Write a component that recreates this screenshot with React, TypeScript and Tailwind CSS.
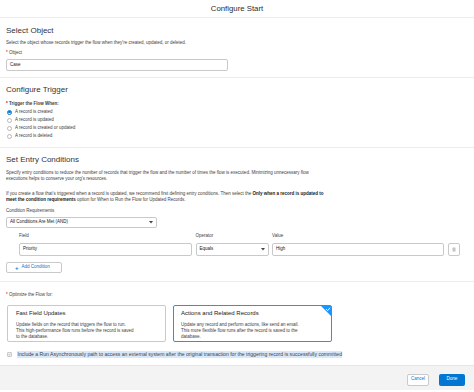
import { ChevronDown } from "lucide-react";

const triggers = [
  "A record is created",
  "A record is updated",
  "A record is created or updated",
  "A record is deleted",
];

function Radio({ checked }: { checked: boolean }) {
  return (
    <span
      className={
        "w-[5px] h-[5px] rounded-full border-[0.6px] flex items-center justify-center bg-white " +
        (checked ? "border-[#0176d3]" : "border-[#b8b8b8]")
      }
    >
      {checked && <span className="w-[2.6px] h-[2.6px] rounded-full bg-[#0176d3]" />}
    </span>
  );
}

function Caret() {
  return (
    <svg width="4" height="3" viewBox="0 0 4 3" className="shrink-0">
      <path d="M0 0 L4 0 L2 2.6 Z" fill="#444" />
    </svg>
  );
}

export default function App() {
  return (
    <div className="w-[474px] h-[392px] bg-white overflow-hidden flex flex-col font-['Liberation_Sans',Arial,sans-serif] text-[#3e3e3c]">
      {/* modal header */}
      <header className="h-[18px] border-b border-[#ececec] text-center text-[7.8px] leading-[17px] text-[#2b2b2b]">
        Configure Start
      </header>

      {/* Select Object */}
      <section className="px-[6px] pt-[8px] pb-[6px] border-b border-[#ececec]">
        <h2 className="text-[8px] leading-[10px] text-[#333]">Select Object</h2>
        <p className="mt-[4px] text-[4.5px] leading-[6px]">
          Select the object whose records trigger the flow when they're created, updated, or deleted.
        </p>
        <p className="mt-[4px] text-[4.5px] leading-[6px]">
          <span className="text-[#ba0517]">*</span> Object
        </p>
        <div className="mt-[3px] w-[222px] h-[12px] border-[0.8px] border-[#c9c9c9] rounded-[2px] flex items-center px-[3px] text-[4.5px] text-[#181818]">
          Case
        </div>
      </section>

      {/* Configure Trigger */}
      <section className="px-[6px] pt-[7px] pb-[7px] border-b border-[#ececec]">
        <h2 className="text-[8px] leading-[10px] text-[#333]">Configure Trigger</h2>
        <p className="mt-[6px] text-[4.5px] leading-[6px] font-bold">
          <span className="text-[#ba0517]">*</span> Trigger the Flow When:
        </p>
        <div className="mt-[1px] flex flex-col">
          {triggers.map((t, i) => (
            <div key={t} className="h-[8px] flex items-center gap-[3px] pl-[1px] text-[4.5px]">
              <Radio checked={i === 0} />
              <span>{t}</span>
            </div>
          ))}
        </div>
      </section>

      {/* Set Entry Conditions */}
      <section className="px-[6px] pt-[7px] pb-[7.5px] border-b border-[#ececec]">
        <h2 className="text-[8px] leading-[10px] text-[#333]">Set Entry Conditions</h2>
        <p className="mt-[4.5px] text-[4.5px] leading-[6px] whitespace-nowrap">
          Specify entry conditions to reduce the number of records that trigger the flow and the number of times the flow is executed. Minimizing unnecessary flow
          <br />
          executions helps to conserve your org's resources.
        </p>
        <p className="mt-[9px] text-[4.5px] leading-[6px] whitespace-nowrap">
          If you create a flow that's triggered when a record is updated, we recommend first defining entry conditions. Then select the{" "}
          <b className="text-[#181818]">Only when a record is updated to</b>
          <br />
          <b className="text-[#181818]">meet the condition requirements</b> option for When to Run the Flow for Updated Records.
        </p>
        <p className="mt-[5px] text-[4.5px] leading-[6px]">Condition Requirements</p>
        <div className="mt-[3.5px] w-[151px] h-[11px] border-[0.8px] border-[#c9c9c9] rounded-[2px] flex items-center justify-between pl-[3px] pr-[3px] text-[4.5px] text-[#181818]">
          <span>All Conditions Are Met (AND)</span>
          <Caret />
        </div>

        <div className="mt-[4.5px] ml-[13px] flex gap-[3.5px] text-[4.5px]">
          <div className="w-[173px]">
            <p className="leading-[6px]">Field</p>
            <div className="mt-[4.5px] h-[12.5px] border-[0.8px] border-[#c9c9c9] rounded-[2px] flex items-center px-[3px] text-[#181818]">
              Priority
            </div>
          </div>
          <div className="w-[73px]">
            <p className="leading-[6px]">Operator</p>
            <div className="mt-[4.5px] h-[12.5px] border-[0.8px] border-[#c9c9c9] rounded-[2px] flex items-center justify-between px-[3px] text-[#181818]">
              <span>Equals</span>
              <Caret />
            </div>
          </div>
          <div className="w-[172px]">
            <p className="leading-[6px]">Value</p>
            <div className="mt-[4.5px] h-[12.5px] border-[0.8px] border-[#c9c9c9] rounded-[2px] flex items-center px-[3px] text-[#181818]">
              High
            </div>
          </div>
          <div className="w-[12px] pt-[10.5px]">
            <div className="h-[12.5px] border-[0.8px] border-[#c9c9c9] rounded-[2px] flex items-center justify-center">
              <svg width="4" height="5" viewBox="0 0 4 5">
                <rect x="0.5" y="0.6" width="3" height="4" rx="0.3" fill="#c4c4c4" />
              </svg>
            </div>
          </div>
        </div>

        <button className="mt-[6.5px] h-[11px] w-[56px] border-[0.8px] border-[#c9c9c9] rounded-[2px] flex items-center gap-[3px] pl-[8px] text-[4.5px] text-[#0176d3]">
          <span className="text-[6px] leading-none font-bold">+</span>
          <span>Add Condition</span>
        </button>
      </section>

      {/* Optimize */}
      <section className="px-[6px] pt-[10.5px]">
        <p className="text-[4.5px] leading-[6px]">
          <span className="text-[#ba0517]">*</span> Optimize the Flow for:
        </p>
        <div className="mt-[7px] ml-[1px] flex gap-[7px]">
          <div className="w-[159px] h-[37px] border-[0.8px] border-[#c9c9c9] rounded-[2px] px-[8px] pt-[3px]">
            <p className="text-[5.9px] leading-[8px] text-[#181818]">Fast Field Updates</p>
            <p className="mt-[5px] text-[4.5px] leading-[6px] whitespace-nowrap">
              Update fields on the record that triggers the flow to run.
              <br />
              This high-performance flow runs before the record is saved
              <br />
              to the database.
            </p>
          </div>
          <div className="relative w-[159px] h-[37px] border-[1px] border-[#1b96ff] rounded-[2px] px-[7px] pt-[3px]">
            <p className="text-[6px] leading-[8px] text-[#181818]">Actions and Related Records</p>
            <p className="mt-[5px] text-[4.5px] leading-[6px] whitespace-nowrap">
              Update any record and perform actions, like send an email.
              <br />
              This more flexible flow runs after the record is saved to the
              <br />
              database.
            </p>
            <svg width="10" height="10" viewBox="0 0 10 10" className="absolute top-0 right-0">
              <path d="M0 0 H10 V10 Z" fill="#1b96ff" />
              <path d="M5 3 L6.6 4.6 L9 1.8" stroke="white" strokeWidth="0.9" fill="none" />
            </svg>
          </div>
        </div>
        <div className="mt-[9px] flex items-center gap-[5px] pl-[1px] h-[7px]">
          <span className="w-[5px] h-[5px] border-[0.6px] border-[#c9c9c9] bg-[#f3f3f3] rounded-[1px] flex items-center justify-center">
            <svg width="3" height="3" viewBox="0 0 3 3">
              <path d="M0.4 1.5 L1.2 2.3 L2.6 0.6" stroke="#939393" strokeWidth="0.5" fill="none" />
            </svg>
          </span>
          <span className="bg-[#d8e8fb] px-[0.5px] text-[5.1px] leading-[7px] whitespace-nowrap">
            Include a Run Asynchronously path to access an external system after the original transaction for the triggering record is successfully committed
          </span>
        </div>
      </section>

      {/* footer */}
      <footer className="mt-auto mb-[2px] h-[25px] bg-[#f3f3f3] border-t border-[#e5e5e5] flex justify-end items-start gap-[10px] pt-[7.5px] pr-[9px]">
        <button className="h-[12px] w-[22px] bg-white border-[0.8px] border-[#c9c9c9] rounded-[2px] text-[4.5px] text-[#0176d3]">
          Cancel
        </button>
        <button className="h-[12px] w-[26px] bg-[#0176d3] rounded-[2px] text-[4.5px] text-white">
          Done
        </button>
      </footer>
    </div>
  );
}
